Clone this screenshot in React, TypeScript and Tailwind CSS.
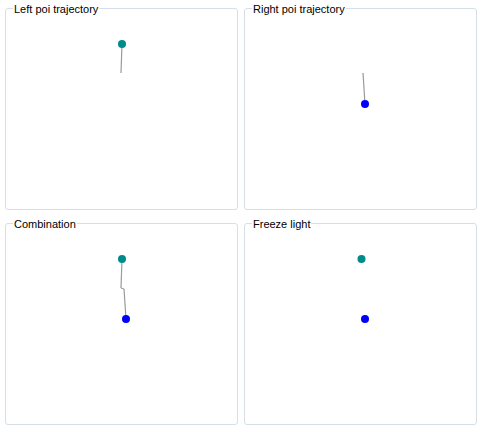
import React from 'react';

type Dot = { x: number; y: number; color: string };
type Seg = { x1: number; y1: number; x2: number; y2: number };

const TEAL = '#008b8b';
const BLUE = '#0000ff';

const panels: { title: string; segs: Seg[]; dots: Dot[] }[] = [
  {
    title: 'Left poi trajectory',
    segs: [{ x1: 116, y1: 35, x2: 115, y2: 64 }],
    dots: [{ x: 116, y: 35, color: TEAL }],
  },
  {
    title: 'Right poi trajectory',
    segs: [{ x1: 118, y1: 64, x2: 120, y2: 95 }],
    dots: [{ x: 120, y: 95, color: BLUE }],
  },
  {
    title: 'Combination',
    segs: [
      { x1: 116, y1: 35, x2: 115, y2: 64 },
      { x1: 115, y1: 64, x2: 118, y2: 65 },
      { x1: 118, y1: 65, x2: 120, y2: 95 },
    ],
    dots: [
      { x: 116, y: 35, color: TEAL },
      { x: 120, y: 95, color: BLUE },
    ],
  },
  {
    title: 'Freeze light',
    segs: [],
    dots: [
      { x: 116.5, y: 35, color: TEAL },
      { x: 120, y: 95, color: BLUE },
    ],
  },
];

function GroupBox({ title, segs, dots }: { title: string; segs: Seg[]; dots: Dot[] }) {
  return (
    <div className="relative h-[202px] w-[233px] rounded-[3px] border border-[#d5dfe5] bg-white">
      <span className="absolute -top-[6px] left-[7px] bg-white px-[1px] text-[11px] leading-[13px] text-black">
        {title}
      </span>
      <svg className="absolute inset-0" width="231" height="200">
        {segs.map((s, i) => (
          <line key={i} x1={s.x1} y1={s.y1} x2={s.x2} y2={s.y2} stroke="#9a9a9a" strokeWidth="1.2" />
        ))}
        {dots.map((d, i) => (
          <circle key={i} cx={d.x} cy={d.y} r="4" fill={d.color} />
        ))}
      </svg>
    </div>
  );
}

export default function App() {
  return (
    <div
      className="h-[432px] w-[484px] bg-white pl-[5px] pt-[8px]"
      style={{ fontFamily: '"Liberation Sans", Arial, sans-serif' }}
    >
      <div className="grid grid-cols-[233px_233px] gap-x-[6px] gap-y-[13px]">
        {panels.map((p) => (
          <GroupBox key={p.title} {...p} />
        ))}
      </div>
    </div>
  );
}
